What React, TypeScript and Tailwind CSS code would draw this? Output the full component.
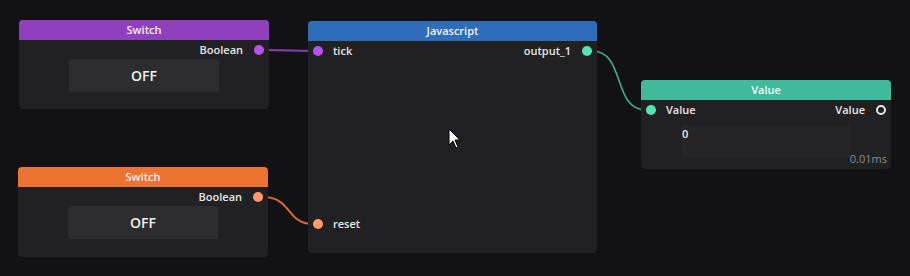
import React from "react";

type Port = { label: string; color: string; hollow?: boolean };

function Dot({ color, hollow }: { color: string; hollow?: boolean }) {
  return hollow ? (
    <span className="block h-[10px] w-[10px] rounded-full border-[2px] border-[#e8e8e8]" />
  ) : (
    <span className="block h-[10px] w-[10px] rounded-full" style={{ backgroundColor: color }} />
  );
}

function OutRow({ port }: { port: Port }) {
  return (
    <div className="flex h-[20px] items-center justify-end gap-[11px] pr-[5px]">
      <span>{port.label}</span>
      <Dot color={port.color} hollow={port.hollow} />
    </div>
  );
}

function InRow({ port }: { port: Port }) {
  return (
    <div className="flex h-[20px] items-center gap-[10px] pl-[5px]">
      <Dot color={port.color} />
      <span>{port.label}</span>
    </div>
  );
}

function SwitchNode({ header, dot, className }: { header: string; dot: string; className: string }) {
  return (
    <div className={"absolute w-[250px] overflow-hidden rounded-[4px] bg-[#212123] " + className}>
      <div className={"flex h-[20px] items-center justify-center text-[#f2eef6] " + header}>Switch</div>
      <OutRow port={{ label: "Boolean", color: dot }} />
      <div className="flex h-[49px] justify-center">
        <div className="mt-[-1px] flex h-[33px] w-[150px] items-center justify-center rounded-[3px] bg-[#2d2d2f] text-[14px] text-[#f0f0f0]">
          OFF
        </div>
      </div>
    </div>
  );
}

export default function App() {
  return (
    <div
      className="relative h-[276px] w-[910px] overflow-hidden bg-[#121214] text-[11px] font-semibold text-[#e6e6e6]"
      style={{ fontFamily: '"Open Sans", "Noto Sans", sans-serif' }}
    >
      <svg className="absolute left-0 top-0" width="910" height="276" fill="none">
        <path d="M264 50 C288 50 290 51 313 51" stroke="#8a3fb0" strokeWidth="2" />
        <path d="M263 197 C292 197 286 224 313 224" stroke="#d9692c" strokeWidth="2" />
        <path d="M592 51 C626 51 612 110 646 110" stroke="#3fae8c" strokeWidth="1.6" />
      </svg>

      <SwitchNode header="bg-[#9140bd]" dot="#b552ea" className="left-[19px] top-[20px] h-[89px]" />
      <SwitchNode header="bg-[#ec7430]" dot="#ff9b68" className="left-[18px] top-[167px] h-[90px]" />

      <div className="absolute left-[308px] top-[21px] flex h-[232px] w-[289px] flex-col overflow-hidden rounded-[4px] bg-[#212123]">
        <div className="flex h-[20px] items-center justify-center bg-[#2f6cb9] text-[#f0f4fa]">Javascript</div>
        <div className="flex h-[20px] items-center justify-between">
          <InRow port={{ label: "tick", color: "#b552ea" }} />
          <OutRow port={{ label: "output_1", color: "#52e6b6" }} />
        </div>
        <div className="mt-[153px]">
          <InRow port={{ label: "reset", color: "#ff9b68" }} />
        </div>
      </div>

      <div className="absolute left-[641px] top-[80px] h-[89px] w-[250px] overflow-hidden rounded-[4px] bg-[#212123]">
        <div className="flex h-[20px] items-center justify-center bg-[#3fba9b] text-[#f2fbf8]">Value</div>
        <div className="flex h-[20px] items-center justify-between">
          <InRow port={{ label: "Value", color: "#52e6b6" }} />
          <OutRow port={{ label: "Value", color: "", hollow: true }} />
        </div>
        <div className="ml-[41px] mt-[5px] h-[32px] w-[168px] bg-[#252527] pt-[1px] text-[#f0f0f0]">0</div>
        <div className="mr-[4px] mt-[-6px] text-right text-[11px] font-normal text-[#8c8c8c]">0.01ms</div>
      </div>

      <svg className="absolute left-[448px] top-[128px]" width="14" height="22" viewBox="0 0 14 22">
        <path d="M1 1 L1 17 L5 13 L8 20 L10 19 L7 12 L12 12 Z" fill="#fff" stroke="#000" strokeWidth="1" />
      </svg>
    </div>
  );
}
